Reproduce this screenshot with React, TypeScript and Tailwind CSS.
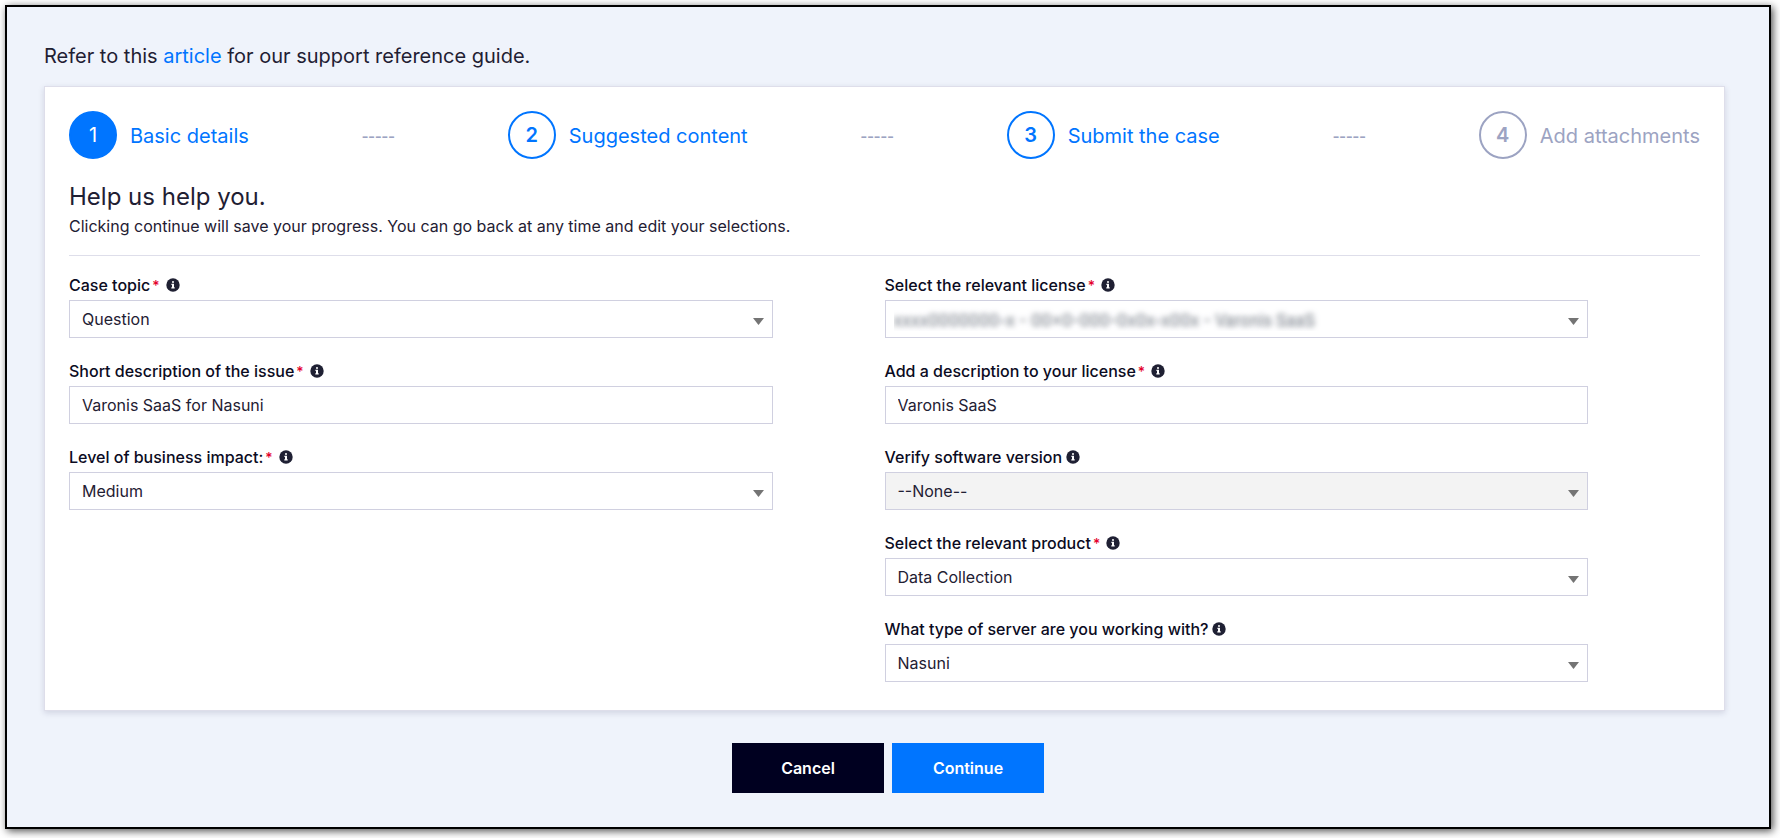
import React from 'react';

interface Step {
    number: number;
    label: string;
    state: 'active' | 'available' | 'disabled';
}

interface FieldProps {
    id: string;
    label: string;
    required?: boolean;
    children: React.ReactNode;
}

interface SelectFieldProps {
    id: string;
    label: string;
    options: string[];
    required?: boolean;
    disabled?: boolean;
    masked?: boolean; // Blurs the selected value
}

interface TextFieldProps {
    id: string;
    label: string;
    value: string;
}

const steps: Step[] = [
    { number: 1, label: 'Basic details', state: 'active' },
    { number: 2, label: 'Suggested content', state: 'available' },
    { number: 3, label: 'Submit the case', state: 'available' },
    { number: 4, label: 'Add attachments', state: 'disabled' },
];

const circleStyle = {
    active: 'border-[#0075ff] bg-[#0075ff] text-white font-normal',
    available: 'border-[#0075ff] text-[#0075ff] font-semibold',
    disabled: 'border-[#9ca3c2] text-[#9ca3c2] font-semibold',
};

const labelStyle = {
    active: 'text-[#0075ff]',
    available: 'text-[#0075ff]',
    disabled: 'text-[#9ca3c2]',
};

const InfoIcon: React.FC = () => (
    <svg className="h-3.5 w-3.5" viewBox="0 0 14 14" aria-hidden="true">
        <circle cx="7" cy="7" r="6.7" fill="#1f2033" />
        <path d="M6 3.2h2v1.6H6zM5.4 5.8H8v3.5h.7v1.2H5.3V9.3H6V7h-.6z" fill="#fff" />
    </svg>
);

const Field: React.FC<FieldProps> = ({ id, label, required, children }) => (
    <div className="flex flex-col">
        <div className="flex h-[30px] items-center">
            <label htmlFor={id} className="text-base font-medium text-[#0b0b22]">
                {label}
                {required && <span className="ml-0.5 text-sm text-[#e4002b]">*</span>}
            </label>
            <button type="button" aria-label={`About ${label}`} className={required ? 'ml-1.5' : 'ml-1'}>
                <InfoIcon />
            </button>
        </div>
        {children}
    </div>
);

const SelectField: React.FC<SelectFieldProps> = ({ id, label, options, required, disabled, masked }) => (
    <Field id={id} label={label} required={required}>
        <div className="relative">
            <select
                id={id}
                disabled={disabled}
                className={`h-[38px] w-full appearance-none border border-[#d0d0e0] pr-8 text-base opacity-100 ${
                    disabled ? 'bg-[#f3f3f3]' : 'bg-white'
                } ${
                    masked
                        ? 'pl-2 text-transparent [text-shadow:0_1px_5px_#a0a5ac,0_1px_7px_#a0a5ac]'
                        : 'pl-3 text-[#1f2033]'
                }`}
            >
                {options.map((option) => (
                    <option key={option}>{option}</option>
                ))}
            </select>
            <svg className="pointer-events-none absolute top-[18px] right-[9px] h-[7px] w-[11px]" viewBox="0 0 11 7" aria-hidden="true">
                <path d="M0 0h11L5.5 7z" fill="#747474" />
            </svg>
        </div>
    </Field>
);

const TextField: React.FC<TextFieldProps> = ({ id, label, value }) => (
    <Field id={id} label={label} required>
        <input
            id={id}
            type="text"
            defaultValue={value}
            className="h-[38px] w-full border border-[#d0d0e0] bg-white px-3 text-base text-[#1f2033]"
        />
    </Field>
);

const App: React.FC = () => {
    return (
        <div className="bg-white pt-[5px] pr-[9px] pb-[9px] pl-[5px] font-[Inter,'Liberation_Sans',sans-serif] text-[#1f2033]">
            <main className="border-2 border-black bg-[#eff3fb] pt-[35px] pb-[34px] shadow-[2px_2px_8px_rgba(0,0,0,0.7)]">
                <div className="mr-11 ml-[37px]">
                    <p className="text-xl leading-7">
                        Refer to this <a href="#article" className="text-[#0075ff]">article</a> for our support reference guide.
                    </p>

                    <section className="mt-4 border border-[#dedeea] bg-white px-6 pt-6 pb-7 shadow-[0_2px_6px_rgba(31,32,80,0.15)]">
                        <ol className="flex items-center justify-between text-xl">
                            {steps.map((step, index) => (
                                <React.Fragment key={step.number}>
                                    {index > 0 && (
                                        <li aria-hidden="true" className="pt-0.5 font-['Liberation_Sans',sans-serif] text-[#9ca3c2]">-----</li>
                                    )}
                                    <li className="flex items-center gap-[13px]">
                                        <span className={`flex h-12 w-12 items-center justify-center rounded-full border-2 ${circleStyle[step.state]}`}>
                                            {step.number}
                                        </span>
                                        <span className={`pt-0.5 ${labelStyle[step.state]}`}>{step.label}</span>
                                    </li>
                                </React.Fragment>
                            ))}
                        </ol>

                        <h1 className="mt-5 text-2xl leading-9">Help us help you.</h1>
                        <p className="border-b border-[#dedeea] pb-[18px] text-base leading-[22px]">
                            Clicking continue will save your progress. You can go back at any time and edit your selections.
                        </p>

                        <form id="case-form" className="mt-3.5 grid grid-cols-2">
                            <div className="flex flex-col gap-[18px] pr-28">
                                <SelectField id="topic" label="Case topic" options={['Question']} required />
                                <TextField id="issue" label="Short description of the issue" value="Varonis SaaS for Nasuni" />
                                <SelectField id="impact" label="Level of business impact:" options={['Medium']} required />
                            </div>
                            <div className="flex flex-col gap-[18px] pr-28">
                                <SelectField
                                    id="license"
                                    label="Select the relevant license"
                                    options={['xxxx0000000-x - 00x0-000-0x0x-x00x - Varonis SaaS']}
                                    required
                                    masked
                                />
                                <TextField id="license-description" label="Add a description to your license" value="Varonis SaaS" />
                                <SelectField id="version" label="Verify software version" options={['--None--']} disabled />
                                <SelectField id="product" label="Select the relevant product" options={['Data Collection']} required />
                                <SelectField id="server" label="What type of server are you working with?" options={['Nasuni']} />
                            </div>
                        </form>
                    </section>
                </div>

                <div className="mt-8 flex justify-center gap-2 text-base font-semibold text-white">
                    <button type="button" className="h-[50px] w-[152px] bg-[#000020]">Cancel</button>
                    <button type="submit" form="case-form" className="h-[50px] w-[152px] bg-[#0075ff]">Continue</button>
                </div>
            </main>
        </div>
    );
};

export default App;
